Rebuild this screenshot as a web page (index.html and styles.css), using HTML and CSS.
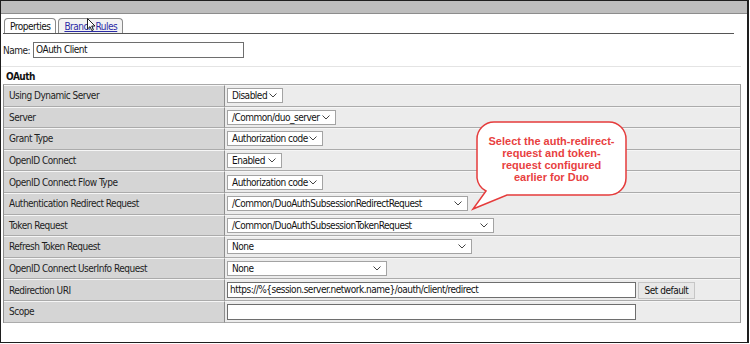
FILE: index.html
```html
<!DOCTYPE html>
<html>
<head>
<meta charset="utf-8">
<link rel="stylesheet" href="styles.css">
</head>
<body>
<div class="frame">
  <div class="topbar"></div>
  <div class="tabs">
    <div class="tab tab-active">Properties</div>
    <div class="tab tab-idle"><a class="tab-link">Branch Rules</a></div>
  </div>
  <div class="name-row">
    <span class="name-label">Name:</span>
    <div class="textbox name-box">OAuth Client</div>
  </div>
  <div class="sep"></div>
  <div class="section-title">OAuth</div>
  <div class="grid">
    <div class="lbl">Using Dynamic Server</div>
    <div class="val"><div class="sel w-dis"><span>Disabled</span><svg class="chev" width="8" height="5" viewBox="0 0 8 5"><path d="M0.5 0.5 L4 4 L7.5 0.5" fill="none" stroke="#444" stroke-width="1"/></svg></div></div>

    <div class="lbl">Server</div>
    <div class="val"><div class="sel w-srv"><span>/Common/duo_server</span><svg class="chev" width="8" height="5" viewBox="0 0 8 5"><path d="M0.5 0.5 L4 4 L7.5 0.5" fill="none" stroke="#444" stroke-width="1"/></svg></div></div>

    <div class="lbl">Grant Type</div>
    <div class="val"><div class="sel w-auth"><span>Authorization code</span><svg class="chev" width="8" height="5" viewBox="0 0 8 5"><path d="M0.5 0.5 L4 4 L7.5 0.5" fill="none" stroke="#444" stroke-width="1"/></svg></div></div>

    <div class="lbl">OpenID Connect</div>
    <div class="val"><div class="sel w-en"><span>Enabled</span><svg class="chev" width="8" height="5" viewBox="0 0 8 5"><path d="M0.5 0.5 L4 4 L7.5 0.5" fill="none" stroke="#444" stroke-width="1"/></svg></div></div>

    <div class="lbl">OpenID Connect Flow Type</div>
    <div class="val"><div class="sel w-auth"><span>Authorization code</span><svg class="chev" width="8" height="5" viewBox="0 0 8 5"><path d="M0.5 0.5 L4 4 L7.5 0.5" fill="none" stroke="#444" stroke-width="1"/></svg></div></div>

    <div class="lbl">Authentication Redirect Request</div>
    <div class="val"><div class="sel w-redir"><span>/Common/DuoAuthSubsessionRedirectRequest</span><svg class="chev" width="8" height="5" viewBox="0 0 8 5"><path d="M0.5 0.5 L4 4 L7.5 0.5" fill="none" stroke="#444" stroke-width="1"/></svg></div></div>

    <div class="lbl">Token Request</div>
    <div class="val"><div class="sel w-tok"><span>/Common/DuoAuthSubsessionTokenRequest</span><svg class="chev" width="8" height="5" viewBox="0 0 8 5"><path d="M0.5 0.5 L4 4 L7.5 0.5" fill="none" stroke="#444" stroke-width="1"/></svg></div></div>

    <div class="lbl">Refresh Token Request</div>
    <div class="val"><div class="sel w-none1"><span>None</span><svg class="chev" width="8" height="5" viewBox="0 0 8 5"><path d="M0.5 0.5 L4 4 L7.5 0.5" fill="none" stroke="#444" stroke-width="1"/></svg></div></div>

    <div class="lbl">OpenID Connect UserInfo Request</div>
    <div class="val"><div class="sel w-none2"><span>None</span><svg class="chev" width="8" height="5" viewBox="0 0 8 5"><path d="M0.5 0.5 L4 4 L7.5 0.5" fill="none" stroke="#444" stroke-width="1"/></svg></div></div>

    <div class="lbl">Redirection URI</div>
    <div class="val"><div class="textbox uri-box">https://%{session.server.network.name}/oauth/client/redirect</div><div class="btn">Set default</div></div>

    <div class="lbl">Scope</div>
    <div class="val"><div class="textbox uri-box"></div></div>
  </div>

  <div class="callout">
    <svg class="callout-shape" width="160" height="100" viewBox="-6 -2 160 100">
      <path d="M17,0 H132 A17,17 0 0 1 149,17 V56 A17,17 0 0 1 132,73 H30 L-4,87 L9,69 A17,17 0 0 1 0,56 V17 A17,17 0 0 1 17,0 Z" fill="#fff" stroke="#e53b3b" stroke-width="1.5"/>
    </svg>
    <div class="callout-text">Select the auth-redirect-<br>request and token-<br>request configured<br>earlier for Duo</div>
  </div>

  <svg class="cursor" width="10" height="14" viewBox="0 0 10 14">
    <path d="M0.5 0.5 L0.5 11 L3 8.6 L4.8 12.6 L6.4 11.9 L4.7 8 L8 8 Z" fill="#fff" stroke="#222" stroke-width="1"/>
  </svg>
</div>
</body>
</html>
```
FILE: styles.css
```css
* { box-sizing: border-box; }
html, body { margin: 0; padding: 0; background: #fff; }
body {
  font-family: "DejaVu Sans Condensed", "DejaVu Sans", "Liberation Sans", sans-serif;
  font-stretch: condensed;
  font-size: 10px;
  letter-spacing: -0.5px;
  color: #222;
}
.frame {
  position: relative;
  width: 749px;
  height: 343px;
  border: 1px solid #1e1e1e;
  border-right-width: 2px;
  overflow: hidden;
}
.topbar {
  height: 13px;
  background: #bdbdbd;
  border-bottom: 1px solid #8c8c8c;
}
.tabs {
  display: flex;
  gap: 2px;
  margin: 4px 0 0 2px;
  padding-left: 1px;
  width: 731px;
  height: 16px;
  border-bottom: 1px solid #555;
}
.tab {
  height: 15px;
  line-height: 15px;
  padding: 0 5px;
  border: 1px solid #8a8a8a;
  border-bottom: none;
  border-radius: 4px 4px 0 0;
  color: #111;
  white-space: nowrap;
}
.tab-active { background: #fff; }
.tab-idle { background: #f3f3f3; padding: 0 5px; }
.tab-link { color: #2b2ba6; text-decoration: underline; }
.name-row {
  display: flex;
  align-items: center;
  gap: 3px;
  margin: 8px 0 0 2px;
  height: 16px;
}
.textbox {
  height: 16px;
  line-height: 14px;
  border: 1px solid #6e6e6e;
  background: #fff;
  padding-left: 2px;
  color: #111;
  white-space: nowrap;
  overflow: hidden;
}
.name-box { width: 211px; }
.sep {
  margin-top: 8px;
  height: 1px;
  width: 740px;
  background: #e4e4e4;
}
.section-title {
  height: 17px;
  line-height: 19px;
  padding-left: 5px;
  font-weight: bold;
  color: #111;
}
.grid {
  display: grid;
  grid-template-columns: 221px 515px;
  grid-auto-rows: 21.6px;
  margin-left: 2px;
  width: 738px;
  border-top: 1px solid #a9a9a9;
  border-left: 1px solid #8f8f8f;
  border-right: 1px solid #9c9c9c;
}
.lbl, .val {
  display: flex;
  align-items: center;
  border-bottom: 1px solid #ababab;
  border-top: 1px solid #f6f6f6;
}
.lbl {
  background: #d5d5d5;
  padding-left: 5px;
  border-right: 1px solid #8e8e8e;
  color: #1e1e1e;
}
.val {
  background: #ececec;
  padding-left: 2px;
  gap: 2px;
}
.sel {
  display: flex;
  align-items: center;
  justify-content: space-between;
  height: 15px;
  border: 1px solid #a3a3a3;
  background: #fff;
  padding: 0 5px 0 4px;
  color: #111;
  white-space: nowrap;
}
.chev { flex: none; }
.w-dis { width: 56px; }
.w-srv { width: 109px; }
.w-auth { width: 96px; }
.w-en { width: 55px; }
.w-redir { width: 241px; }
.w-tok { width: 267px; }
.w-none1 { width: 245px; }
.w-none2 { width: 160px; }
.uri-box { width: 409px; }
.btn {
  width: 57px;
  height: 17px;
  line-height: 15px;
  text-align: center;
  background: #e8e8e8;
  border: 1px solid #c6c6c6;
  color: #111;
}
.callout {
  position: absolute;
  left: 476px;
  top: 121px;
  width: 149px;
  height: 73px;
}
.callout-shape {
  position: absolute;
  left: -6px;
  top: -2px;
  overflow: visible;
}
.callout-text {
  position: relative;
  height: 73px;
  display: flex;
  align-items: center;
  justify-content: center;
  text-align: center;
  font-family: "Liberation Sans", Arial, sans-serif;
  font-stretch: normal;
  font-size: 11px;
  line-height: 12px;
  letter-spacing: 0;
  font-weight: bold;
  color: #e8413f;
}
.cursor {
  position: absolute;
  left: 86px;
  top: 17px;
}
```
